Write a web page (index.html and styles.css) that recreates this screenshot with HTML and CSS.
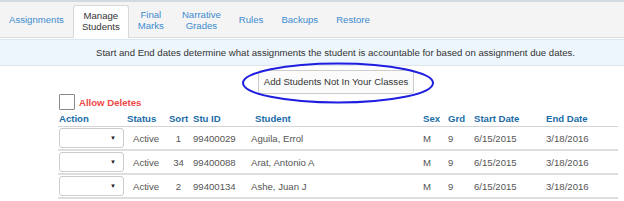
FILE: index.html
```html
<!DOCTYPE html>
<html>
<head>
<meta charset="utf-8">
<link rel="stylesheet" href="styles.css">
</head>
<body>
<div class="tabbar">
  <div class="tab">Assignments</div>
  <div class="tab active">Manage<br>Students</div>
  <div class="tab">Final<br>Marks</div>
  <div class="tab">Narrative<br>Grades</div>
  <div class="tab">Rules</div>
  <div class="tab">Backups</div>
  <div class="tab">Restore</div>
</div>
<div class="info"><div class="info-text">Start and End dates determine what assignments the student is accountable for based on assignment due dates.</div></div>
<div class="main">
  <div class="btn-row"><div class="btn">Add Students Not In Your Classes</div></div>
  <div class="allow"><span class="cb"></span><span class="allow-label">Allow Deletes</span></div>
  <table class="grid">
    <thead>
      <tr>
        <th class="c-action">Action</th>
        <th class="c-status">Status</th>
        <th class="c-sort">Sort</th>
        <th class="c-id">Stu ID</th>
        <th class="c-name h-name">Student</th>
        <th class="c-sex">Sex</th>
        <th class="c-grd">Grd</th>
        <th class="c-start">Start Date</th>
        <th class="c-end">End Date</th>
      </tr>
    </thead>
    <tbody>
      <tr>
        <td><div class="sel"><span class="arrow">▼</span></div></td>
        <td class="d-status">Active</td><td class="d-sort">1</td><td>99400029</td><td>Aguila, Errol</td><td>M</td><td>9</td><td>6/15/2015</td><td>3/18/2016</td>
      </tr>
      <tr>
        <td><div class="sel"><span class="arrow">▼</span></div></td>
        <td class="d-status">Active</td><td class="d-sort">34</td><td>99400088</td><td>Arat, Antonio A</td><td>M</td><td>9</td><td>6/15/2015</td><td>3/18/2016</td>
      </tr>
      <tr>
        <td><div class="sel"><span class="arrow">▼</span></div></td>
        <td class="d-status">Active</td><td class="d-sort">2</td><td>99400134</td><td>Ashe, Juan J</td><td>M</td><td>9</td><td>6/15/2015</td><td>3/18/2016</td>
      </tr>
    </tbody>
  </table>
</div>
<svg class="ellipse" width="200" height="46" viewBox="0 0 200 46"><ellipse cx="100" cy="23" rx="95" ry="19.5" fill="none" stroke="#1e1ee0" stroke-width="2"/></svg>
</body>
</html>
```
FILE: styles.css
```css
html, body { margin: 0; padding: 0; background: #fff; }
body { font-family: "Liberation Sans", Arial, sans-serif; font-size: 9.6px; color: #333; position: relative; width: 624px; height: 201px; overflow: hidden; }
.tabbar { border-top: 2px solid #d3d9e0; background: #f4f4f4; height: 35px; border-bottom: 1px solid #dcdcdc; display: flex; align-items: stretch; padding-left: 0; }
.tab { color: #3d8ccf; padding: 0 9px; display: flex; align-items: center; justify-content: center; text-align: center; line-height: 11px; }
.tab.active { background: #fff; color: #333; margin-top: 3px; margin-bottom: -1px; border: 1px solid #d8d8d8; border-bottom: none; border-radius: 3px 3px 0 0; padding: 0 8px 2px; }
.info { margin-top: 1px; background: #eef6fd; border-top: 1px solid #dde6ee; border-bottom: 1px solid #dde6ee; height: 25px; }
.info-text { margin-left: 58px; width: 555px; text-align: center; line-height: 26px; color: #333; }
.main { margin-left: 58px; width: 555px; }
.btn-row { display: flex; justify-content: center; padding-top: 4px; padding-left: 1px; }
.btn { width: 154px; height: 22px; border: 1px solid #ccc; border-radius: 3px; background: #fbfbfb; text-align: center; line-height: 22px; color: #333; }
.allow { display: flex; align-items: center; height: 16px; margin-top: 0; }
.cb { width: 14px; height: 14px; border: 1px solid #888; border-radius: 1px; margin-left: 1px; background: #fff; }
.allow-label { color: #f04848; font-weight: bold; margin-left: 4px; }
.grid { border-collapse: collapse; margin-top: 1px; table-layout: fixed; width: 555px; }
.grid th { font-weight: bold; color: #1b6ca8; text-align: left; padding: 0; height: 15px; border-bottom: 1px solid #d4d4d4; vertical-align: middle; line-height: 15px; }
.grid td { padding: 0; height: 22px; border-bottom: 2px solid #dedede; color: #555; vertical-align: middle; }
.c-action { width: 68px; padding-left: 1px !important; }
.c-status { width: 37px; }
.c-sort { width: 29px; }
.c-id { width: 58px; }
.c-name { width: 168px; }
.c-sex { width: 25px; }
.c-grd { width: 26px; }
.c-start { width: 72px; }
.c-end { width: 72px; }
.grid th.c-sort, .grid td.d-sort { text-align: center; }
.h-name { padding-left: 4px !important; }
.d-status { padding-left: 6px !important; }
.sel { width: 63px; height: 18px; border: 1px solid #ccc; border-radius: 3px; background: #fff; margin-left: 1px; position: relative; }
.arrow { position: absolute; right: 7px; top: 5px; font-size: 6px; line-height: 8px; color: #222; }
.ellipse { position: absolute; left: 238px; top: 60px; }
```
